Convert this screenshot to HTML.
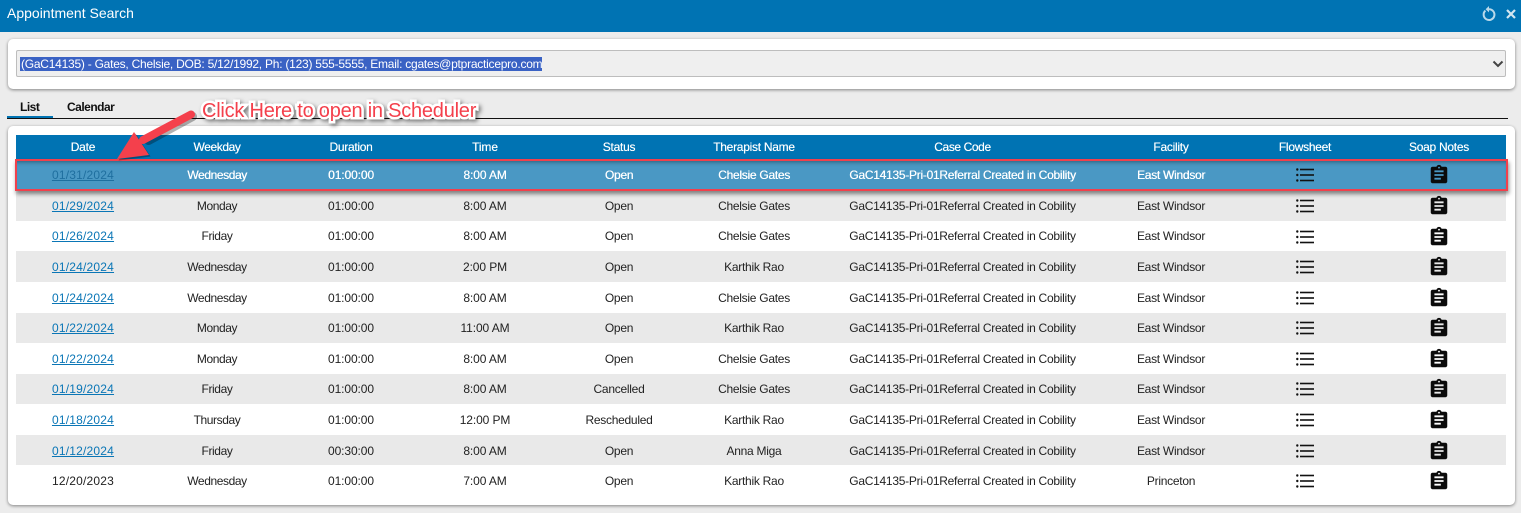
<!DOCTYPE html>
<html><head><meta charset="utf-8"><title>Appointment Search</title>
<style>
html,body{margin:0;padding:0;width:1521px;height:513px;overflow:hidden;background:#ececec;font-family:"Liberation Sans",sans-serif;color:#222}
*{box-sizing:border-box}
.a{position:absolute}
#bar{left:0;top:0;width:1521px;height:32px;background:#0073b3;color:#fff;font-size:14px;line-height:27px;padding-left:7px}
.card{background:#fff;border-radius:5px;box-shadow:0 1px 3px rgba(0,0,0,.45);left:8px;width:1507px}
#sel{left:16px;top:50px;width:1490px;height:27px;background:#efefef;border:1px solid #bdbdbd;border-radius:2px}
#hl{left:20px;top:57px;width:522px;height:14px;background:#3a62c4;color:#fff;font-size:12px;line-height:14px;white-space:nowrap;padding-left:1px;letter-spacing:-.24px;overflow:hidden}
.tab{font-size:12px;font-weight:bold;color:#111;top:100px;line-height:14px;letter-spacing:-.5px}
.r{position:absolute;left:16px;width:1490px;font-size:12px;color:#222;letter-spacing:-.27px}
.r span{position:absolute;top:.4px;text-align:center;white-space:nowrap;line-height:30.6px;height:30.6px}
.r.d span{top:1.1px}
.c1{left:0;width:134px;letter-spacing:.2px}.c2{left:134px;width:134px;letter-spacing:-.4px}.c3{left:268px;width:134px;letter-spacing:-.1px}.c4{left:402px;width:134px;letter-spacing:-.1px}.c5{left:536px;width:134px}.c6{left:671px;width:134px}.c7{left:805px;width:283px}.c8{left:1088px;width:134px}.c9{left:1222px;width:134px}.c10{left:1356px;width:134px}
.r a{color:#0a76b6;text-decoration:underline}
.g{background:#e9e9e9}
.h{background:#0073b3;color:#fff;height:24px;text-shadow:0 0 .4px #fff}
.h span{line-height:24px;height:24px;top:0}
.s{background:#4a98c4;color:#fff;box-shadow:inset 0 5px 5px -3px rgba(0,0,0,.4)}
.s span{text-shadow:.3px 0 .3px #fff}
.s span.c1{text-shadow:none}
.s a{color:#1f6f9f}
#tip{left:202px;top:99px;font-size:20px;line-height:24px;color:#f4404c;white-space:nowrap;letter-spacing:-.23px;-webkit-text-stroke:5px #fff;paint-order:stroke fill;filter:drop-shadow(2px 2px 2px rgba(0,0,0,.5))}
</style></head><body>
<svg width="0" height="0" style="position:absolute"><defs>
<symbol id="li" viewBox="0 0 18 14"><g fill="#111"><circle cx="1.3" cy="1.5" r="1.2"/><circle cx="1.3" cy="7" r="1.2"/><circle cx="1.3" cy="12.5" r="1.2"/><rect x="4" y=".7" width="14" height="1.6"/><rect x="4" y="6.2" width="14" height="1.6"/><rect x="4" y="11.7" width="14" height="1.6"/></g></symbol>
<symbol id="cl" viewBox="0 0 24 24"><path fill="#0b0b0b" d="M19 3h-4.18C14.4 1.84 13.3 1 12 1s-2.4.84-2.82 2H5c-1.1 0-2 .9-2 2v14c0 1.1.9 2 2 2h14c1.1 0 2-.9 2-2V5c0-1.1-.9-2-2-2zm-7 0c.55 0 1 .45 1 1s-.45 1-1 1-1-.45-1-1 .45-1 1-1zm2 14H7v-2h7v2zm3-4H7v-2h10v2zm0-4H7V7h10v2z"/></symbol>
</defs></svg>

<div class="a" id="bar">Appointment Search</div>
<svg class="a" style="left:1481px;top:6px" width="16" height="16" viewBox="0 0 16 16"><path d="M4.400 4.600A5.400 5.400 0 1 0 8 3.200" fill="none" stroke="#b9d9ea" stroke-width="2"/><path d="M8 0v6.400L4.600 3.200z" fill="#b9d9ea"/></svg>
<svg class="a" style="left:1506px;top:9px" width="10" height="10" viewBox="0 0 10 10"><path d="M1 1l8 8M9 1l-8 8" stroke="#d3e6f1" stroke-width="2.200"/></svg>

<div class="a card" style="top:39px;height:50px"></div>
<div class="a" id="sel"></div>
<div class="a" id="hl">(GaC14135) - Gates, Chelsie, DOB: 5/12/1992, Ph: (123) 555-5555, Email: cgates@ptpracticepro.com</div>
<svg class="a" style="left:1492px;top:60px" width="12" height="8" viewBox="0 0 12 8"><path d="M1.500 1.500L6 6l4.500-4.500" fill="none" stroke="#444" stroke-width="2"/></svg>

<div class="a tab" style="left:20px">List</div>
<div class="a tab" style="left:67px">Calendar</div>
<div class="a" style="left:7px;top:118px;width:1501px;height:1px;background:#111"></div>
<div class="a" style="left:7px;top:116px;width:46px;height:2px;background:#0073b3"></div>

<div class="a card" style="top:126px;height:379px"></div>

<div class="r h" style="top:135px"><span class="c1" style="letter-spacing:-.2px">Date</span><span class="c2">Weekday</span><span class="c3" style="letter-spacing:-.3px">Duration</span><span class="c4">Time</span><span class="c5">Status</span><span class="c6">Therapist Name</span><span class="c7" style="letter-spacing:-.4px">Case Code</span><span class="c8">Facility</span><span class="c9">Flowsheet</span><span class="c10">Soap Notes</span></div>

<div class="r s" style="top:159.5px;height:30.6px"><span class="c1"><a>01/31/2024</a></span><span class="c2">Wednesday</span><span class="c3">01:00:00</span><span class="c4">8:00 AM</span><span class="c5">Open</span><span class="c6">Chelsie Gates</span><span class="c7">GaC14135-Pri-01Referral Created in Cobility</span><span class="c8">East Windsor</span></div>
<div class="r g d" style="top:190.1px;height:30.6px"><span class="c1"><a>01/29/2024</a></span><span class="c2">Monday</span><span class="c3">01:00:00</span><span class="c4">8:00 AM</span><span class="c5">Open</span><span class="c6">Chelsie Gates</span><span class="c7">GaC14135-Pri-01Referral Created in Cobility</span><span class="c8">East Windsor</span></div>
<div class="r" style="top:220.7px;height:30.6px"><span class="c1"><a>01/26/2024</a></span><span class="c2">Friday</span><span class="c3">01:00:00</span><span class="c4">8:00 AM</span><span class="c5">Open</span><span class="c6">Chelsie Gates</span><span class="c7">GaC14135-Pri-01Referral Created in Cobility</span><span class="c8">East Windsor</span></div>
<div class="r g" style="top:251.3px;height:30.6px"><span class="c1"><a>01/24/2024</a></span><span class="c2">Wednesday</span><span class="c3">01:00:00</span><span class="c4">2:00 PM</span><span class="c5">Open</span><span class="c6">Karthik Rao</span><span class="c7">GaC14135-Pri-01Referral Created in Cobility</span><span class="c8">East Windsor</span></div>
<div class="r d" style="top:281.9px;height:30.6px"><span class="c1"><a>01/24/2024</a></span><span class="c2">Wednesday</span><span class="c3">01:00:00</span><span class="c4">8:00 AM</span><span class="c5">Open</span><span class="c6">Chelsie Gates</span><span class="c7">GaC14135-Pri-01Referral Created in Cobility</span><span class="c8">East Windsor</span></div>
<div class="r g" style="top:312.5px;height:30.6px"><span class="c1"><a>01/22/2024</a></span><span class="c2">Monday</span><span class="c3">01:00:00</span><span class="c4">11:00 AM</span><span class="c5">Open</span><span class="c6">Karthik Rao</span><span class="c7">GaC14135-Pri-01Referral Created in Cobility</span><span class="c8">East Windsor</span></div>
<div class="r d" style="top:343.1px;height:30.6px"><span class="c1"><a>01/22/2024</a></span><span class="c2">Monday</span><span class="c3">01:00:00</span><span class="c4">8:00 AM</span><span class="c5">Open</span><span class="c6">Chelsie Gates</span><span class="c7">GaC14135-Pri-01Referral Created in Cobility</span><span class="c8">East Windsor</span></div>
<div class="r g" style="top:373.7px;height:30.6px"><span class="c1"><a>01/19/2024</a></span><span class="c2">Friday</span><span class="c3">01:00:00</span><span class="c4">8:00 AM</span><span class="c5">Cancelled</span><span class="c6">Chelsie Gates</span><span class="c7">GaC14135-Pri-01Referral Created in Cobility</span><span class="c8">East Windsor</span></div>
<div class="r" style="top:404.3px;height:30.6px"><span class="c1"><a>01/18/2024</a></span><span class="c2">Thursday</span><span class="c3">01:00:00</span><span class="c4">12:00 PM</span><span class="c5">Rescheduled</span><span class="c6">Karthik Rao</span><span class="c7">GaC14135-Pri-01Referral Created in Cobility</span><span class="c8">East Windsor</span></div>
<div class="r g d" style="top:434.9px;height:30.6px"><span class="c1"><a>01/12/2024</a></span><span class="c2">Friday</span><span class="c3">00:30:00</span><span class="c4">8:00 AM</span><span class="c5">Open</span><span class="c6">Anna Miga</span><span class="c7">GaC14135-Pri-01Referral Created in Cobility</span><span class="c8">East Windsor</span></div>
<div class="r" style="top:465.5px;height:30.6px"><span class="c1">12/20/2023</span><span class="c2">Wednesday</span><span class="c3">01:00:00</span><span class="c4">7:00 AM</span><span class="c5">Open</span><span class="c6">Karthik Rao</span><span class="c7">GaC14135-Pri-01Referral Created in Cobility</span><span class="c8">Princeton</span></div>

<svg class="a" style="left:1296px;top:168px" width="18" height="14"><use href="#li"/></svg>
<svg class="a" style="left:1296px;top:199px" width="18" height="14"><use href="#li"/></svg>
<svg class="a" style="left:1296px;top:230px" width="18" height="14"><use href="#li"/></svg>
<svg class="a" style="left:1296px;top:260px" width="18" height="14"><use href="#li"/></svg>
<svg class="a" style="left:1296px;top:291px" width="18" height="14"><use href="#li"/></svg>
<svg class="a" style="left:1296px;top:321px" width="18" height="14"><use href="#li"/></svg>
<svg class="a" style="left:1296px;top:352px" width="18" height="14"><use href="#li"/></svg>
<svg class="a" style="left:1296px;top:382px" width="18" height="14"><use href="#li"/></svg>
<svg class="a" style="left:1296px;top:413px" width="18" height="14"><use href="#li"/></svg>
<svg class="a" style="left:1296px;top:444px" width="18" height="14"><use href="#li"/></svg>
<svg class="a" style="left:1296px;top:474px" width="18" height="14"><use href="#li"/></svg>

<svg class="a" style="left:1428px;top:164px" width="22" height="22"><use href="#cl"/></svg>
<svg class="a" style="left:1428px;top:195px" width="22" height="22"><use href="#cl"/></svg>
<svg class="a" style="left:1428px;top:226px" width="22" height="22"><use href="#cl"/></svg>
<svg class="a" style="left:1428px;top:256px" width="22" height="22"><use href="#cl"/></svg>
<svg class="a" style="left:1428px;top:287px" width="22" height="22"><use href="#cl"/></svg>
<svg class="a" style="left:1428px;top:317px" width="22" height="22"><use href="#cl"/></svg>
<svg class="a" style="left:1428px;top:348px" width="22" height="22"><use href="#cl"/></svg>
<svg class="a" style="left:1428px;top:378px" width="22" height="22"><use href="#cl"/></svg>
<svg class="a" style="left:1428px;top:409px" width="22" height="22"><use href="#cl"/></svg>
<svg class="a" style="left:1428px;top:440px" width="22" height="22"><use href="#cl"/></svg>
<svg class="a" style="left:1428px;top:470px" width="22" height="22"><use href="#cl"/></svg>

<div class="a" style="left:15px;top:159px;width:1493px;height:32px;border:2.5px solid #f2404c;box-shadow:1px 3px 4px rgba(0,0,0,.45)"></div>

<svg class="a" style="left:105px;top:105px;overflow:visible" width="95" height="60" viewBox="105 105 95 60">
<path d="M191 114.500L147 138.500" stroke="rgba(0,0,0,.3)" stroke-width="9" stroke-linecap="round" transform="translate(1.500 2)" fill="none"/>
<path d="M117 159L134 132L149 155Z" fill="rgba(0,0,0,.3)" transform="translate(1.500 1.500)"/>
<path d="M191 114.500L143 140" stroke="#f4404c" stroke-width="8" stroke-linecap="round" fill="none"/>
<path d="M117 159L134 132L149 155Z" fill="#f4404c"/>
</svg>
<div class="a" id="tip">Click Here to open in Scheduler</div>
</body></html>
